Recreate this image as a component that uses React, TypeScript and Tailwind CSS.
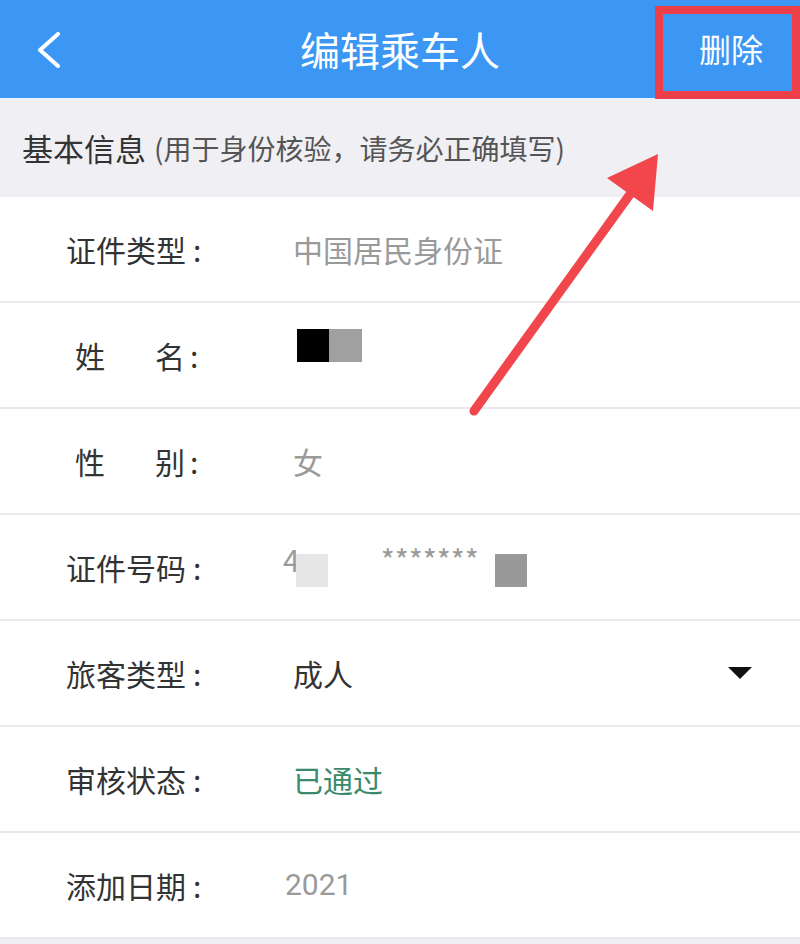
import React from "react";

const font = { fontFamily: '"Noto Sans CJK SC", "Noto Sans", sans-serif' };

function Label({ text }: { text: string }) {
  return (
    <span className="flex items-center">
      <span>{text}</span>
      <span className="ml-[7px]">:</span>
    </span>
  );
}

function Row({ label, children }: { label: React.ReactNode; children: React.ReactNode }) {
  return (
    <div className="flex h-[106px] items-center border-b-2 border-[#e9e9ec] bg-white pl-[66px]">
      <div className="w-[227px] shrink-0 text-[30px] leading-none text-[#333]">{label}</div>
      <div className="flex flex-1 items-center">{children}</div>
    </div>
  );
}

export default function App() {
  return (
    <div className="relative h-[944px] w-[800px] overflow-hidden bg-[#eeeff2]" style={font}>
      {/* Header */}
      <div className="relative flex h-[98px] items-center justify-center bg-[#3b97f3]">
        <svg className="absolute left-[36px] top-[32px]" width="28" height="36" viewBox="0 0 28 36">
          <polyline points="22,2 4,18 22,34" fill="none" stroke="white" strokeWidth="4" strokeLinecap="round" strokeLinejoin="round" />
        </svg>
        <div className="text-[40px] leading-none text-white">编辑乘车人</div>
        <div className="absolute right-[37px] top-[32px] text-[32px] leading-none text-white">删除</div>
        <div className="absolute right-0 top-[6px] h-[93px] w-[145px] border-[8px] border-[#ec3f4a]" />
      </div>

      {/* Section title */}
      <div className="flex h-[99px] items-center bg-[#efeff4] pl-[22px]">
        <span className="text-[31px] leading-none text-[#333]">基本信息</span>
        <span className="ml-[8px] text-[28px] leading-none text-[#555]">(用于身份核验，请务必正确填写)</span>
      </div>

      {/* Rows */}
      <Row label={<Label text="证件类型" />}>
        <span className="text-[30px] leading-none text-[#9a9a9a]">中国居民身份证</span>
      </Row>
      <Row
        label={
          <span className="flex items-center pl-[9px]">
            <span>姓</span>
            <span className="ml-[50px]">名</span>
            <span className="ml-[5px]">:</span>
          </span>
        }
      >
        <div className="mb-[19px] ml-[4px] flex">
          <div className="h-[33px] w-[32px] bg-black" />
          <div className="h-[33px] w-[33px] bg-[#a0a0a0]" />
        </div>
      </Row>
      <Row
        label={
          <span className="flex items-center pl-[9px]">
            <span>性</span>
            <span className="ml-[50px]">别</span>
            <span className="ml-[5px]">:</span>
          </span>
        }
      >
        <span className="text-[30px] leading-none text-[#9a9a9a]">女</span>
      </Row>
      <Row label={<Label text="证件号码" />}>
        <div className="ml-[-10px] mb-[4px] flex items-start">
          <span className="text-[30px] leading-none text-[#9a9a9a]">4</span>
          <div className="ml-[-4px] mt-[10px] h-[33px] w-[32px] bg-[#e6e6e6]" />
          <span className="ml-[53px] text-[30px] leading-none text-[#9a9a9a]">*******</span>
          <div className="ml-[16px] mt-[10px] h-[33px] w-[32px] bg-[#999]" />
        </div>
      </Row>
      <Row label={<Label text="旅客类型" />}>
        <span className="text-[30px] leading-none text-[#333]">成人</span>
        <svg className="ml-auto mr-[48px]" width="24" height="12" viewBox="0 0 24 12">
          <polygon points="0,0 24,0 12,12" fill="#111" />
        </svg>
      </Row>
      <Row label={<Label text="审核状态" />}>
        <span className="text-[30px] leading-none text-[#3a8a6a]">已通过</span>
      </Row>
      <Row label={<Label text="添加日期" />}>
        <span className="ml-[-8px] text-[30px] leading-none text-[#9a9a9a]" style={{ fontFamily: "Roboto, sans-serif" }}>
          2021
        </span>
      </Row>

      {/* Arrow annotation */}
      <svg className="pointer-events-none absolute left-0 top-0" width="800" height="944" viewBox="0 0 800 944">
        <line x1="474" y1="411" x2="636" y2="186" stroke="#f2464d" strokeWidth="9" strokeLinecap="round" />
        <polygon points="658,154 607,178 653,211" fill="#f2464d" />
      </svg>
    </div>
  );
}
